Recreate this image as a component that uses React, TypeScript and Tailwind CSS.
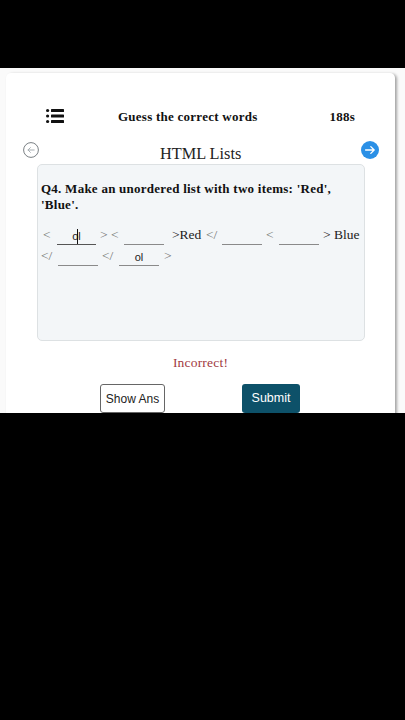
import React from "react";

const Blank = ({ value = "", className = "" }: { value?: string; className?: string }) => (
  <span className={`inline-block w-[40px] h-[17px] border-b border-[#8a8a8a] text-center text-[11px] leading-[17px] text-[#222] font-['Liberation_Sans',sans-serif] ${className}`}>
    {value}
  </span>
);

export default function App() {
  return (
    <div className="h-[720px] w-[405px] bg-black overflow-hidden flex flex-col">
      <div className="h-[68px] shrink-0 bg-black" />
      <div className="h-[345px] shrink-0 bg-[#fafafa] overflow-hidden px-[6px] pt-[5px]">
        <div className="w-[389px] h-[400px] pt-[33px] bg-white rounded-[5px] shadow-[2px_1px_3px_rgba(0,0,0,0.35)] font-['Liberation_Serif',serif] text-[#111]">
          <div className="flex items-center h-[20px]">
            <svg className="ml-[40px] w-[18px] h-[16px] shrink-0" viewBox="0 0 18 16" fill="#111">
              <circle cx="1.6" cy="2.5" r="1.6" />
              <circle cx="1.6" cy="8" r="1.6" />
              <circle cx="1.6" cy="13.5" r="1.6" />
              <rect x="5" y="1" width="13" height="3" rx="0.6" />
              <rect x="5" y="6.5" width="13" height="3" rx="0.6" />
              <rect x="5" y="12" width="13" height="3" rx="0.6" />
            </svg>
            <span className="ml-[54px] mt-[1px] text-[13px] font-bold tracking-[0.25px] whitespace-nowrap">Guess the correct words</span>
            <span className="ml-[72px] mt-[1px] text-[13px] font-bold tracking-[0.3px]">188s</span>
          </div>
          <div className="flex items-start h-[28px] mt-[15px]">
            <svg className="ml-[17px] mt-[1px] w-[16px] h-[16px] shrink-0" viewBox="0 0 16 16" fill="none">
              <circle cx="8" cy="8" r="7.4" stroke="#6b7276" strokeWidth="0.9" fill="#fff" />
              <path d="M11.2 8H5M7.4 5.6 5 8l2.4 2.4" stroke="#a9b0b4" strokeWidth="1" strokeLinecap="round" strokeLinejoin="round" />
            </svg>
            <span className="ml-[121px] mt-[3px] w-[81px] text-[16.3px] leading-[20px] text-[#222] whitespace-nowrap">HTML Lists</span>
            <svg className="ml-[120px] w-[18px] h-[18px] shrink-0" viewBox="0 0 18 18" fill="none">
              <circle cx="9" cy="9" r="9" fill="#2b90e6" />
              <path d="M4.6 9h8.6M9.8 5.6 13.2 9l-3.4 3.4" stroke="#fff" strokeWidth="1.3" strokeLinecap="round" strokeLinejoin="round" />
            </svg>
          </div>
          <div className="ml-[31px] w-[328px] h-[177px] -mt-[5px] bg-[#f3f6f8] border border-[#dde1e3] rounded-[5px] px-[3px] pt-[16px]">
            <p className="text-[13px] font-bold leading-[16px] tracking-[0.25px] text-[#111]">
              Q4. Make an unordered list with two items: 'Red', 'Blue'.
            </p>
            <div className="mt-[11px] text-[13.5px] leading-[21px] text-[#222] whitespace-nowrap">
              <div className="flex items-end h-[21px]">
                <span className="ml-[2px] text-[#777] w-[14px]">&lt;</span>
                <span className="w-[39px] h-[17px] border-b border-[#555] text-center text-[11px] leading-[17px] font-['Liberation_Sans',sans-serif] relative">
                  ol
                  <span className="absolute left-[20px] top-[1px] w-px h-[15px] bg-[#111]" />
                </span>
                <span className="ml-[4px] text-[#777] w-[11px]">&gt;</span>
                <span className="text-[#777] w-[13px]">&lt;</span>
                <Blank className="w-[39px]" />
                <span className="ml-[8px] w-[34px]">&gt;Red</span>
                <span className="text-[#777] w-[16px]">&lt;/</span>
                <Blank />
                <span className="ml-[4px] text-[#777] w-[13px]">&lt;</span>
                <Blank />
                <span className="ml-[4px]">&gt; Blue</span>
              </div>
              <div className="flex items-end h-[21px]">
                <span className="text-[#777] w-[17px]">&lt;/</span>
                <Blank className="w-[39px]" />
                <span className="ml-[4px] text-[#777] w-[17px]">&lt;/</span>
                <Blank value="ol" className="w-[39px]" />
                <span className="ml-[5px] text-[#777]">&gt;</span>
              </div>
            </div>
          </div>
          <div className="mt-[14px] text-center text-[13.5px] leading-[16px] tracking-[0.2px] text-[#a23a3f]">Incorrect!</div>
          <div className="flex mt-[13px]">
            <button className="ml-[94px] w-[65px] h-[29px] bg-white border border-[#666] rounded-[3px] text-[12px] text-[#222] font-['Liberation_Sans',sans-serif]">Show Ans</button>
            <button className="ml-[77px] w-[58px] h-[29px] bg-[#0d5169] rounded-[3px] text-[12.5px] text-white font-['Liberation_Sans',sans-serif]">Submit</button>
          </div>
        </div>
      </div>
      <div className="flex-1 bg-black" />
    </div>
  );
}
